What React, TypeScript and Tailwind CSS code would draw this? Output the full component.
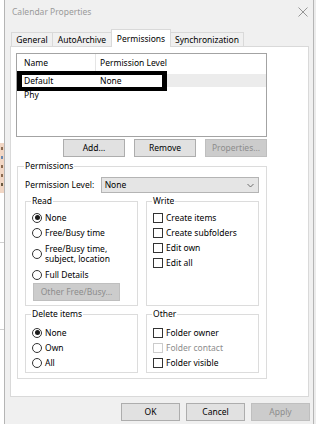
import React from 'react';

// Outlook "Calendar Properties" dialog, Permissions tab

const Btn = ({ label, disabled, className = '' }: { label: string; disabled?: boolean; className?: string }) => (
  <div
    className={`h-[18px] flex items-center justify-center border ${
      disabled ? 'bg-[#cccccc] border-[#bfbfbf] text-[#8d8d8d]' : 'bg-[#e1e1e1] border-[#adadad] text-black'
    } ${className}`}
  >
    {label}
  </div>
);

const Radio = ({ label, checked, className = 'h-[15px]' }: { label: React.ReactNode; checked?: boolean; className?: string }) => (
  <div className={`flex items-center gap-[3px] ${className}`}>
    <span className="w-[10px] h-[10px] rounded-full border border-[#333333] bg-white flex items-center justify-center shrink-0">
      {checked && <span className="w-[5px] h-[5px] rounded-full bg-[#1a1a1a]" />}
    </span>
    <span>{label}</span>
  </div>
);

const Check = ({ label, disabled }: { label: string; disabled?: boolean }) => (
  <div className="flex items-center gap-[3px] h-[15px]">
    <span className={`w-[10px] h-[10px] border bg-white shrink-0 ${disabled ? 'border-[#cccccc]' : 'border-[#333333]'}`} />
    <span className={disabled ? 'text-[#8d8d8d]' : ''}>{label}</span>
  </div>
);

const Group = ({ label, className = '', labelLeft = 'left-[5px]', children }: any) => (
  <div className={`relative border border-[#dcdcdc] ${className}`}>
    <span className={`absolute -top-[7px] ${labelLeft} bg-white px-[1px] leading-[12px]`}>{label}</span>
    {children}
  </div>
);

const Tab = ({ label, width, active }: { label: string; width: string; active?: boolean }) => (
  <div
    className={`${width} -ml-px first:ml-0 flex items-center justify-center border-x border-t border-[#d9d9d9] ${
      active ? 'h-[18px] -mb-px bg-white relative z-10' : 'h-[14px] bg-[#f0f0f0]'
    }`}
  >
    {label}
  </div>
);

export default function App() {
  return (
    <div className="w-[316px] h-[424px] overflow-hidden flex bg-white text-black text-[8.5px] leading-[12px] font-['Noto_Sans',sans-serif]">
      {/* window behind the dialog */}
      <div className="w-[4px] shrink-0 flex flex-col">
        <div className="h-[143px]" />
        <div className="h-[50px] bg-[#f1d6c4] flex flex-col gap-[6px] pt-[4px] pl-[1px]">
          <span className="w-[2px] h-[3px] bg-[#8a6a50]" />
          <span className="w-[2px] h-[3px] bg-[#6a88b0]" />
          <span className="w-[2px] h-[3px] bg-[#8a6a50]" />
          <span className="w-[2px] h-[3px] bg-[#8a6a50]" />
          <span className="w-[2px] h-[3px] bg-[#6a5a40]" />
        </div>
        <div className="h-[49px]" />
        <div className="h-px bg-[#d0d0d0]" />
        <div className="h-[86px]" />
        <div className="h-px bg-[#d0d0d0]" />
      </div>

      {/* dialog */}
      <div className="w-[310px] shrink-0 bg-[#f0f0f0] border-x border-[#b5b5b5] flex flex-col">
        <div className="h-[29px] flex items-start justify-between pt-[6px] pl-[7px] pr-[5px]">
          <span className="text-[#9a9a9a]">Calendar Properties</span>
          <svg width="10" height="10" viewBox="0 0 10 10" className="mt-px">
            <path d="M0.5 0.5 L9.5 9.5 M9.5 0.5 L0.5 9.5" stroke="#8a8a8a" strokeWidth="0.9" fill="none" />
          </svg>
        </div>

        <div className="flex items-end pl-[6px] h-[17px]">
          <Tab label="General" width="w-[42px]" />
          <Tab label="AutoArchive" width="w-[60px]" />
          <Tab label="Permissions" width="w-[60px]" active />
          <Tab label="Synchronization" width="w-[74px]" />
        </div>

        <div className="ml-[5px] w-[299px] h-[351px] bg-white border border-[#d9d9d9] flex flex-col">
          {/* user list */}
          <div className="relative ml-[5px] mt-[6px] w-[251px] h-[84px] border border-[#a3a3a3] flex flex-col">
            <div className="h-[18px] flex items-center">
              <div className="w-[79px] h-full pl-[7px] flex items-center border-r border-[#e5e5e5]">Name</div>
              <div className="pl-[4px]">Permission Level</div>
            </div>
            <div className="mt-[2px] h-[13px] flex items-center bg-[#ececec]">
              <div className="w-[83px] pl-[7px] h-full flex items-center bg-white">Default</div>
              <div className="h-full flex items-center bg-white w-[67px]">None</div>
            </div>
            <div className="h-[14px] flex items-center">
              <div className="w-[83px] pl-[7px] pt-[2px] flex items-center gap-[3px]">
                Phy
              </div>
            </div>
            <span className="absolute left-0 top-[17px] w-[150px] h-[20px] border-x-[5px] border-y-[4px] border-black" />
          </div>

          <div className="flex gap-[9px] ml-[52px] mt-[2px]">
            <Btn label="Add..." className="w-[62px]" />
            <Btn label="Remove" className="w-[62px]" />
            <Btn label="Properties..." disabled className="w-[62px]" />
          </div>

          {/* permissions */}
          <Group label="Permissions" labelLeft="left-[6px]" className="ml-[6px] mt-[9px] w-[250px] h-[213px] px-[7px] flex flex-col">
            <div className="mt-[10px] flex items-center">
              <span className="w-[76px]">Permission Level:</span>
              <div className="w-[159px] h-[16px] bg-[#e5e5e5] border border-[#b4b4b4] flex items-center justify-between pl-[3px] pr-[4px]">
                <span>None</span>
                <svg width="7" height="5" viewBox="0 0 7 5">
                  <path d="M0.5 1 L3.5 4 L6.5 1" stroke="#606060" strokeWidth="0.9" fill="none" />
                </svg>
              </div>
            </div>

            <div className="mt-[8px] flex gap-[8px]">
              <Group label="Read" className="w-[114px] h-[105px] pl-[6px] pt-[8px]">
                <Radio label="None" checked />
                <Radio label="Free/Busy time" />
                <Radio
                  label={<span className="flex flex-col leading-[10px]"><span>Free/Busy time,</span><span>subject, location</span></span>}
                  className="h-[27px]"
                />
                <Radio label="Full Details" className="h-[15px]" />
                <Btn label="Other Free/Busy..." disabled className="mt-[1px] ml-[1px] w-[87px] h-[17px]" />
              </Group>
              <Group label="Write" className="w-[114px] h-[105px] pl-[6px] pt-[8px]">
                <Check label="Create items" />
                <Check label="Create subfolders" />
                <Check label="Edit own" />
                <Check label="Edit all" />
              </Group>
            </div>

            <div className="mt-[8px] flex gap-[8px]">
              <Group label="Delete items" className="w-[114px] h-[59px] pl-[6px] pt-[10px]">
                <Radio label="None" checked />
                <Radio label="Own" />
                <Radio label="All" />
              </Group>
              <Group label="Other" className="w-[114px] h-[59px] pl-[6px] pt-[10px]">
                <Check label="Folder owner" />
                <Check label="Folder contact" disabled />
                <Check label="Folder visible" />
              </Group>
            </div>
          </Group>
        </div>

        <div className="flex gap-[6px] ml-[116px] mt-[6px]">
          <Btn label="OK" className="w-[59px]" />
          <Btn label="Cancel" className="w-[59px]" />
          <Btn label="Apply" disabled className="w-[59px]" />
        </div>
      </div>

      <div className="flex-1 bg-[#ececec]" />
    </div>
  );
}
